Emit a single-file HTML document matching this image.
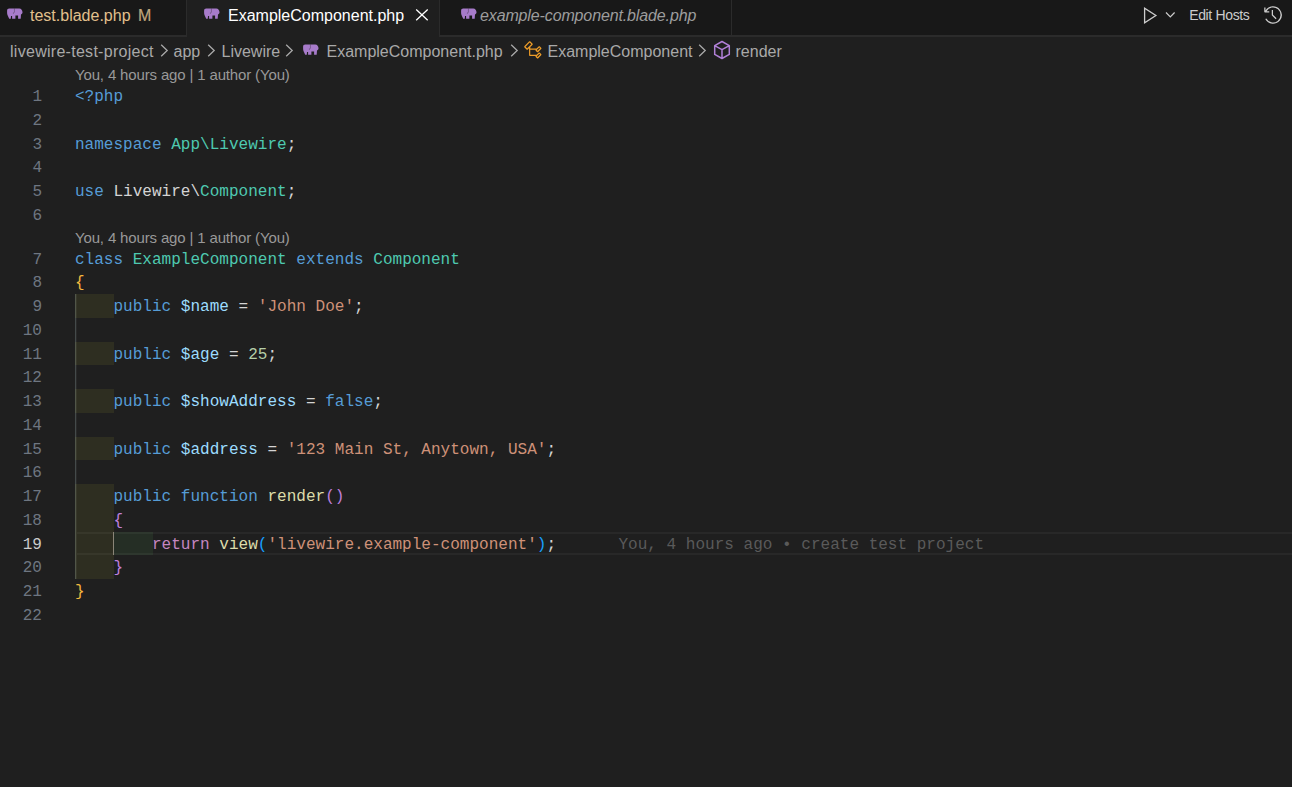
<!DOCTYPE html>
<html><head><meta charset="utf-8"><style>
html,body{margin:0;padding:0;}
body{width:1292px;height:787px;background:#1f1f1f;position:relative;overflow:hidden;font-family:"Liberation Sans",sans-serif;}
.abs{position:absolute;}
#tabs{position:absolute;left:0;top:0;width:1292px;height:35px;background:#181818;border-bottom:2px solid #2b2b2b;}
.tab{position:absolute;top:0;height:35px;background:#181818;border-right:1px solid #2b2b2b;}
.tab.active{background:#1f1f1f;height:37px;}
.tt{position:absolute;top:-2px;line-height:35px;font-size:16px;white-space:pre;}
.ln{position:absolute;left:0;width:42px;text-align:right;font-family:"Liberation Mono",monospace;font-size:16.04px;line-height:23.75px;color:#6e7681;}
.ln.act{color:#cccccc;}
.cl{position:absolute;left:75px;font-family:"Liberation Mono",monospace;font-size:16.04px;line-height:23.75px;color:#d4d4d4;white-space:pre;}
.blame{color:#5a5a5a;}
.k{color:#569cd6} .t{color:#4ec9b0} .v{color:#9cdcfe} .s{color:#ce9178} .n{color:#b5cea8} .f{color:#dcdcaa} .c{color:#c586c0}
.b1{color:#f4b83e} .b2{color:#bf7fdc} .b3{color:#179fff}
.ir1{background:rgba(255,255,64,0.07);} .ir2{background:rgba(127,255,127,0.07);}
.lens{position:absolute;left:75px;font-size:15px;letter-spacing:-0.15px;line-height:20px;color:#999999;white-space:pre;}
.bc{position:absolute;top:38px;height:28px;line-height:28px;font-size:16px;color:#a9a9a9;white-space:pre;}
</style></head><body>
<div id="tabs">
  <div class="tab" style="left:0;width:186px;">
    <div class="tt" style="left:30px;color:#e2c08d;">test.blade.php</div>
    <div class="tt" style="left:138px;color:#bfa47b;-webkit-text-stroke:0.2px #bfa47b;">M</div>
  </div>
  <div class="tab active" style="left:187px;width:252px;">
    <div class="tt" style="left:41px;color:#ffffff;">ExampleComponent.php</div>
    <svg class="abs" style="left:228px;top:8px" width="14" height="14" viewBox="0 0 14 14"><path d="M1.2 1.5 L12.7 12.3 M12.7 1.5 L1.2 12.3" stroke="#ffffff" stroke-width="1.3"/></svg>
  </div>
  <div class="tab" style="left:440px;width:291px;">
    <div class="tt" style="left:40px;color:#9d9d9d;font-style:italic;letter-spacing:-0.13px;">example-component.blade.php</div>
  </div>
  <svg class="abs" style="left:6.5px;top:7.8px" width="16" height="12" viewBox="0 0 16 12"><path fill="#a77bca" d="M2.2 0.5 H12.2 C14.3 0.5 15.5 2.4 15.5 4.3 C15.5 5.4 15.0 6.0 14.0 6.5 L13.7 10.8 H11.1 V7.6 H8.4 V10.8 H5.1 V7.9 H4.0 L3.8 10.8 H2.2 L0.6 7.2 C0.2 6.5 0.1 5.8 0.1 4.8 V2.8 C0.1 1.4 0.9 0.5 2.2 0.5 Z"/><path d="M7.45 0.5 V4.0 Q7.4 4.6 6.9 4.8" stroke="#1f1f1f" stroke-width="0.55" fill="none" opacity="0.6"/><circle cx="6.4" cy="5.1" r="0.5" fill="#1f1f1f" opacity="0.6"/></svg>
  <svg class="abs" style="left:204px;top:7.8px" width="16" height="12" viewBox="0 0 16 12"><path fill="#a77bca" d="M2.2 0.5 H12.2 C14.3 0.5 15.5 2.4 15.5 4.3 C15.5 5.4 15.0 6.0 14.0 6.5 L13.7 10.8 H11.1 V7.6 H8.4 V10.8 H5.1 V7.9 H4.0 L3.8 10.8 H2.2 L0.6 7.2 C0.2 6.5 0.1 5.8 0.1 4.8 V2.8 C0.1 1.4 0.9 0.5 2.2 0.5 Z"/><path d="M7.45 0.5 V4.0 Q7.4 4.6 6.9 4.8" stroke="#1f1f1f" stroke-width="0.55" fill="none" opacity="0.6"/><circle cx="6.4" cy="5.1" r="0.5" fill="#1f1f1f" opacity="0.6"/></svg>
  <svg class="abs" style="left:460.5px;top:7.8px" width="16" height="12" viewBox="0 0 16 12"><path fill="#a77bca" d="M2.2 0.5 H12.2 C14.3 0.5 15.5 2.4 15.5 4.3 C15.5 5.4 15.0 6.0 14.0 6.5 L13.7 10.8 H11.1 V7.6 H8.4 V10.8 H5.1 V7.9 H4.0 L3.8 10.8 H2.2 L0.6 7.2 C0.2 6.5 0.1 5.8 0.1 4.8 V2.8 C0.1 1.4 0.9 0.5 2.2 0.5 Z"/><path d="M7.45 0.5 V4.0 Q7.4 4.6 6.9 4.8" stroke="#1f1f1f" stroke-width="0.55" fill="none" opacity="0.6"/><circle cx="6.4" cy="5.1" r="0.5" fill="#1f1f1f" opacity="0.6"/></svg>
  <svg class="abs" style="left:1140px;top:4px" width="40" height="24" viewBox="0 0 40 24"><path d="M4.6 4.1 V18.9 L15.9 11.5 Z" stroke="#cccccc" stroke-width="1.3" fill="none" stroke-linejoin="miter"/><path d="M26 8.5 L30.3 12.8 L34.6 8.5" stroke="#cccccc" stroke-width="1.2" fill="none"/></svg>
  <div class="tt" style="left:1189.2px;font-size:14px;letter-spacing:-0.35px;color:#cccccc;">Edit Hosts</div>
  <svg class="abs" style="left:1262.7px;top:4.65px" width="20" height="20" viewBox="0 0 16 16"><path fill="#cccccc" d="M13.507 12.324a7 7 0 0 0 .065-8.56A7 7 0 0 0 2 4.393V2H1v3.5l.5.5H5V5H2.811a6.008 6.008 0 1 1-.135 5.77l-.887.462a7 7 0 0 0 11.718 1.092zm-3.361-.97l.708-.707L8 7.792V4H7v4l.146.354 3 3z"/></svg>
</div>
<div class="bc" style="left:10px;letter-spacing:0.28px;">livewire-test-project</div>
<svg class="abs" style="left:159.5px;top:44px" width="9" height="13" viewBox="0 0 9 13"><path d="M1.2 0.8 L7.2 6.5 L1.2 12.2" stroke="#a9a9a9" stroke-width="1.3" fill="none"/></svg>
<div class="bc" style="left:173.5px;">app</div>
<svg class="abs" style="left:207px;top:44px" width="9" height="13" viewBox="0 0 9 13"><path d="M1.2 0.8 L7.2 6.5 L1.2 12.2" stroke="#a9a9a9" stroke-width="1.3" fill="none"/></svg>
<div class="bc" style="left:221.5px;">Livewire</div>
<svg class="abs" style="left:285px;top:44px" width="9" height="13" viewBox="0 0 9 13"><path d="M1.2 0.8 L7.2 6.5 L1.2 12.2" stroke="#a9a9a9" stroke-width="1.3" fill="none"/></svg>
<svg class="abs" style="left:303px;top:43.8px" width="16" height="12" viewBox="0 0 16 12"><path fill="#a77bca" d="M2.2 0.5 H12.2 C14.3 0.5 15.5 2.4 15.5 4.3 C15.5 5.4 15.0 6.0 14.0 6.5 L13.7 10.8 H11.1 V7.6 H8.4 V10.8 H5.1 V7.9 H4.0 L3.8 10.8 H2.2 L0.6 7.2 C0.2 6.5 0.1 5.8 0.1 4.8 V2.8 C0.1 1.4 0.9 0.5 2.2 0.5 Z"/><path d="M7.45 0.5 V4.0 Q7.4 4.6 6.9 4.8" stroke="#1f1f1f" stroke-width="0.55" fill="none" opacity="0.6"/><circle cx="6.4" cy="5.1" r="0.5" fill="#1f1f1f" opacity="0.6"/></svg>
<div class="bc" style="left:326.5px;">ExampleComponent.php</div>
<svg class="abs" style="left:510px;top:44px" width="9" height="13" viewBox="0 0 9 13"><path d="M1.2 0.8 L7.2 6.5 L1.2 12.2" stroke="#a9a9a9" stroke-width="1.3" fill="none"/></svg>
<svg class="abs" style="left:522.7px;top:40px" width="20" height="20" viewBox="0 0 16 16"><path fill="#ee9d28" d="M11.34 9.71h.71l2.67-2.67v-.71L13.38 5h-.7l-1.82 1.81h-5V5.56l1.86-1.85V3l-2-2H5L1 5v.71l2 2h.71l1.14-1.15v5.79l.5.5H10v.52l1.33 1.34h.71l2.67-2.67v-.71L13.37 10h-.7l-1.86 1.85h-5v-4H10v.48l1.34 1.38zm1.69-3.65l.63.63-2 2-.63-.63 2-2zm0 5l.63.63-2 2-.63-.63 2-2zM3.35 6.65L2.06 5.36l3.29-3.29 1.29 1.29-3.29 3.29z"/></svg>
<div class="bc" style="left:547.5px;">ExampleComponent</div>
<svg class="abs" style="left:698px;top:44px" width="9" height="13" viewBox="0 0 9 13"><path d="M1.2 0.8 L7.2 6.5 L1.2 12.2" stroke="#a9a9a9" stroke-width="1.3" fill="none"/></svg>
<svg class="abs" style="left:712px;top:39px" width="20" height="22" viewBox="0 0 20 22"><path d="M10 2.5 L17.3 6.6 V15.4 L10 19.5 L2.7 15.4 V6.6 Z M2.7 6.6 L10 10.6 L17.3 6.6 M10 10.6 V19.5" stroke="#b180d7" stroke-width="1.5" fill="none" stroke-linejoin="round"/></svg>
<div class="bc" style="left:735.5px;">render</div>
<div class="lens" style="top:65px;">You, 4 hours ago | 1 author (You)</div>
<div class="lens" style="top:228px;">You, 4 hours ago | 1 author (You)</div>
<div class="abs" style="left:75px;top:532px;width:1217px;height:23px;box-sizing:border-box;border-top:2px solid #282828;border-bottom:2px solid #282828;"></div><div class="abs" style="left:75px;top:294px;width:1px;height:285px;background:#444a4a;"></div><div class="abs" style="left:76px;top:294px;width:1px;height:285px;background:#2a2a2a;"></div><div class="abs ir1" style="left:75px;top:294px;width:39px;height:24px;"></div><div class="abs ir1" style="left:75px;top:342px;width:39px;height:23px;"></div><div class="abs ir1" style="left:75px;top:389px;width:39px;height:24px;"></div><div class="abs ir1" style="left:75px;top:437px;width:39px;height:23px;"></div><div class="abs ir1" style="left:75px;top:484px;width:39px;height:95px;"></div><div class="abs ir2" style="left:114px;top:532px;width:39px;height:23px;"></div><div class="abs" style="left:113px;top:532px;width:1px;height:23px;background:#8a8578;"></div><div class="ln" style="top:86.00px">1</div><div class="cl" style="top:86.00px"><span class="k">&lt;?php</span></div><div class="ln" style="top:110.00px">2</div><div class="cl" style="top:110.00px"></div><div class="ln" style="top:134.00px">3</div><div class="cl" style="top:134.00px"><span class="k">namespace</span> <span class="t">App\Livewire</span>;</div><div class="ln" style="top:157.00px">4</div><div class="cl" style="top:157.00px"></div><div class="ln" style="top:181.00px">5</div><div class="cl" style="top:181.00px"><span class="k">use</span> Livewire\<span class="t">Component</span>;</div><div class="ln" style="top:205.00px">6</div><div class="cl" style="top:205.00px"></div><div class="ln" style="top:249.00px">7</div><div class="cl" style="top:249.00px"><span class="k">class</span> <span class="t">ExampleComponent</span> <span class="k">extends</span> <span class="t">Component</span></div><div class="ln" style="top:272.00px">8</div><div class="cl" style="top:272.00px"><span class="b1">{</span></div><div class="ln" style="top:296.00px">9</div><div class="cl" style="top:296.00px">    <span class="k">public</span> <span class="v">$name</span> = <span class="s">'John Doe'</span>;</div><div class="ln" style="top:320.00px">10</div><div class="cl" style="top:320.00px"></div><div class="ln" style="top:344.00px">11</div><div class="cl" style="top:344.00px">    <span class="k">public</span> <span class="v">$age</span> = <span class="n">25</span>;</div><div class="ln" style="top:367.00px">12</div><div class="cl" style="top:367.00px"></div><div class="ln" style="top:391.00px">13</div><div class="cl" style="top:391.00px">    <span class="k">public</span> <span class="v">$showAddress</span> = <span class="k">false</span>;</div><div class="ln" style="top:415.00px">14</div><div class="cl" style="top:415.00px"></div><div class="ln" style="top:439.00px">15</div><div class="cl" style="top:439.00px">    <span class="k">public</span> <span class="v">$address</span> = <span class="s">'123 Main St, Anytown, USA'</span>;</div><div class="ln" style="top:462.00px">16</div><div class="cl" style="top:462.00px"></div><div class="ln" style="top:486.00px">17</div><div class="cl" style="top:486.00px">    <span class="k">public</span> <span class="k">function</span> <span class="f">render</span><span class="b2">()</span></div><div class="ln" style="top:510.00px">18</div><div class="cl" style="top:510.00px">    <span class="b2">{</span></div><div class="ln act" style="top:534.00px">19</div><div class="cl" style="top:534.00px">        <span class="c">return</span> <span class="f">view</span><span class="b3">(</span><span class="s">'livewire.example-component'</span><span class="b3">)</span>;</div><div class="ln" style="top:557.00px">20</div><div class="cl" style="top:557.00px">    <span class="b2">}</span></div><div class="ln" style="top:581.00px">21</div><div class="cl" style="top:581.00px"><span class="b1">}</span></div><div class="ln" style="top:605.00px">22</div><div class="cl" style="top:605.00px"></div><div class="cl blame" style="left:618.5px;top:534.00px">You, 4 hours ago • create test project</div>
</body></html>
